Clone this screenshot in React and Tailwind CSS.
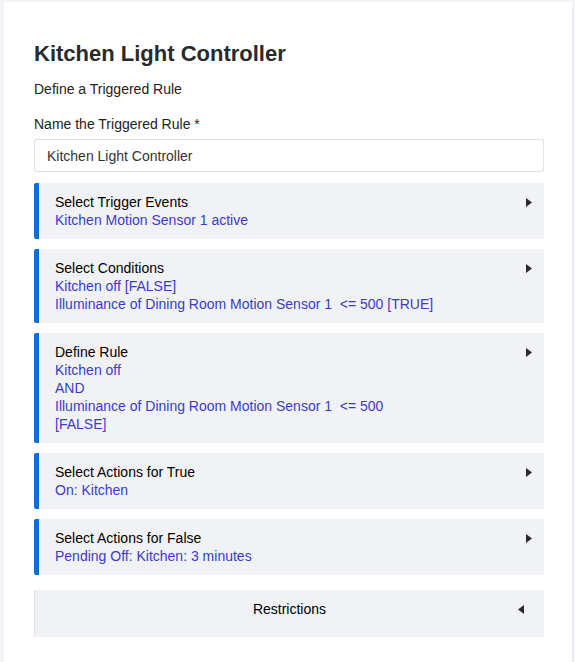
import React from 'react'

const panels = [
  { title: 'Select Trigger Events', lines: ['Kitchen Motion Sensor 1 active'] },
  {
    title: 'Select Conditions',
    lines: ['Kitchen off [FALSE]', 'Illuminance of Dining Room Motion Sensor 1  <= 500 [TRUE]'],
  },
  {
    title: 'Define Rule',
    lines: ['Kitchen off', 'AND', 'Illuminance of Dining Room Motion Sensor 1  <= 500', '[FALSE]'],
  },
  { title: 'Select Actions for True', lines: ['On: Kitchen'] },
  { title: 'Select Actions for False', lines: ['Pending Off: Kitchen: 3 minutes'] },
]

const TriRight = () => (
  <svg width="6" height="9" viewBox="0 0 6 9" className="mt-[5px] shrink-0">
    <polygon points="0,0 6,4.5 0,9" fill="#2b2b2b" />
  </svg>
)

const TriLeft = () => (
  <svg width="6" height="9" viewBox="0 0 6 9" className="shrink-0">
    <polygon points="6,0 0,4.5 6,9" fill="#2b2b2b" />
  </svg>
)

const Panel = ({ title, lines }) => (
  <div className="flex bg-[#f1f2f6] border-l-[5px] border-[#0a6fd4] pl-4 pr-3 pt-[10px] pb-[10px] rounded-l-[2px]">
    <div className="flex-1 text-[14px] leading-[18px]">
      <div className="text-black whitespace-pre">{title}</div>
      {lines.map((l, i) => (
        <div key={i} className="text-[#3b3bc9] whitespace-pre">{l}</div>
      ))}
    </div>
    <TriRight />
  </div>
)

export default function App() {
  return (
    <div className="min-h-[662px] bg-[#f3f4f7] pt-[2px] pl-[4px] font-['Liberation_Sans',Arial,sans-serif]">
      <div className="w-[569px] min-h-[660px] bg-white border-r border-[#e8e9ee] pl-[30px] pr-[28px] pt-[38px]">
        <h1 className="text-[22px] leading-[28px] font-bold text-[#2a2a2a]">Kitchen Light Controller</h1>
        <p className="mt-[12px] text-[14px] leading-[18px] text-[#222]">Define a Triggered Rule</p>
        <label className="block mt-[17px] text-[14px] leading-[18px] text-[#222]">Name the Triggered Rule *</label>
        <div className="mt-[6px] h-[33px] border border-[#dfe1e7] rounded-[2px] px-[12px] pt-[2px] flex items-center text-[14px] text-[#333]">
          Kitchen Light Controller
        </div>
        <div className="mt-[11px] flex flex-col gap-[10px]">
          {panels.map((p) => (
            <Panel key={p.title} {...p} />
          ))}
        </div>
        <div className="mt-[15px] flex items-start bg-[#f1f2f6] border-l border-[#e0e2e8] pt-[10px] pb-[19px] pr-[20px]">
          <div className="flex-1 text-center text-[14px] leading-[18px] text-black pl-[26px]">Restrictions</div>
          <div className="h-[18px] flex items-center">
            <TriLeft />
          </div>
        </div>
      </div>
    </div>
  )
}
